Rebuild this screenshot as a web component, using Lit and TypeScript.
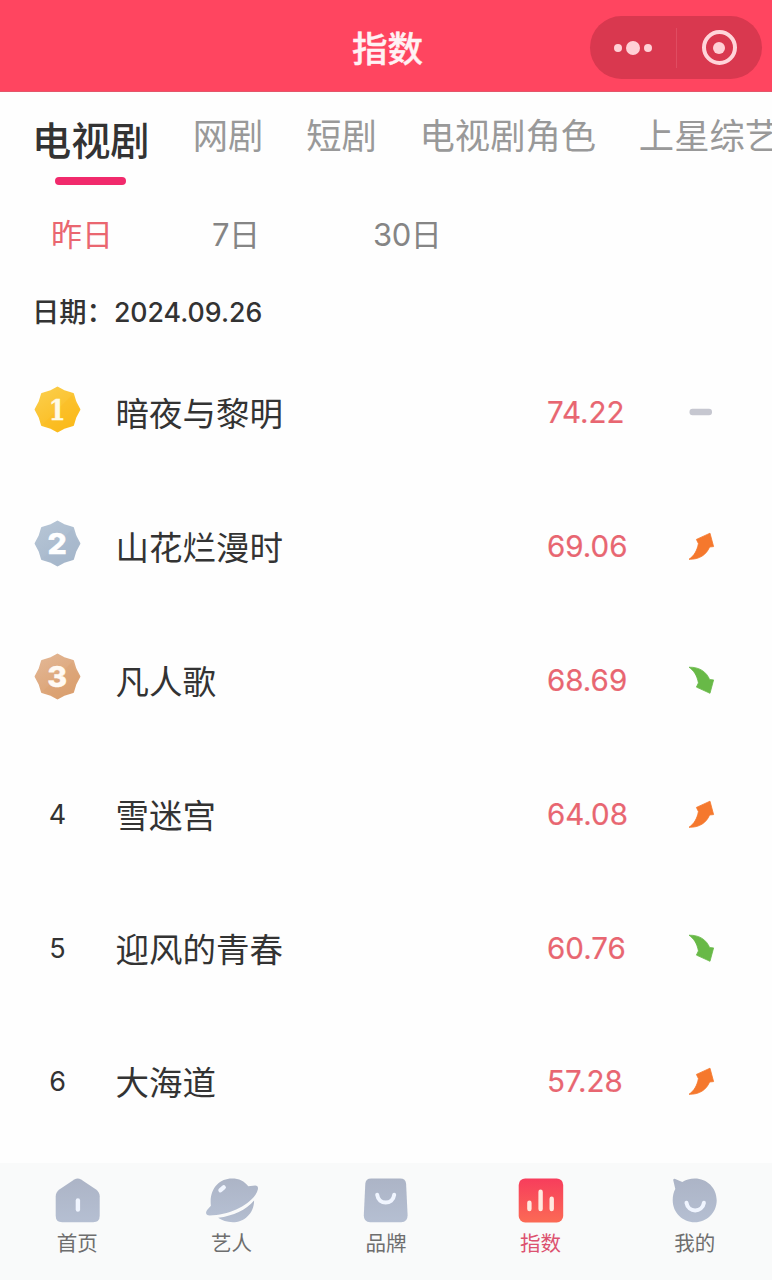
import { LitElement, html, css, svg } from "lit";
import { customElement, property } from "lit/decorators.js";
import { classMap } from "lit/directives/class-map.js";

type Trend = "up" | "down" | "flat";
interface Show { rank: number; name: string; score: string; trend: Trend }

const SHOWS: Show[] = [
  { rank: 1, name: "暗夜与黎明", score: "74.22", trend: "flat" },
  { rank: 2, name: "山花烂漫时", score: "69.06", trend: "up" },
  { rank: 3, name: "凡人歌", score: "68.69", trend: "down" },
  { rank: 4, name: "雪迷宫", score: "64.08", trend: "up" },
  { rank: 5, name: "迎风的青春", score: "60.76", trend: "down" },
  { rank: 6, name: "大海道", score: "57.28", trend: "up" },
];

const MEDALS = [
  { from: "#fbcf4e", to: "#fbbb1c", digit: "#fffbe6" },
  { from: "#b7c6d6", to: "#a6b7cb", digit: "#ffffff" },
  { from: "#e3b897", to: "#dba070", digit: "#fffaf4" },
];

/* Eight-pointed star outline centred on 23.5,23.5 */
const STAR = Array.from({ length: 16 }, (_, i) => {
  const r = i % 2 ? 19.4 : 21.9;
  const a = (i * Math.PI) / 8;
  return `${(23.5 + r * Math.sin(a)).toFixed(2)},${(23.5 - r * Math.cos(a)).toFixed(2)}`;
}).join(" ");

@customElement("rank-medal")
export class RankMedal extends LitElement {
  @property({ type: Number }) rank = 1;
  static styles = css`
    :host { display: block; width: 47px; height: 47px; }
    svg { display: block; }
    .serif { font: 700 28px "DejaVu Serif", serif; }
    .sans { font: 800 28px Inter, sans-serif; }
  `;
  render() {
    const m = MEDALS[this.rank - 1];
    const first = this.rank === 1;
    return html`<svg width="47" height="47" viewBox="0 0 47 47">
      <defs>
        <linearGradient id="g" x1="0" y1="0" x2="0.6" y2="1">
          <stop offset="0" stop-color=${m.from}></stop><stop offset="1" stop-color=${m.to}></stop>
        </linearGradient>
      </defs>
      <polygon points=${STAR} fill="url(#g)" stroke="url(#g)" stroke-width="2" stroke-linejoin="round"></polygon>
      <path d="M9 38 L38 9 L40.5 15.5 L45 23.5 L38.5 38.5 L23.5 45 L16 41 Z" fill=${m.to} opacity="0.35"></path>
      <text class=${first ? "serif" : "sans"} transform=${first ? "translate(23 33.7) scale(.86 1)" : "translate(23.2 34) scale(1.08 1)"}
        text-anchor="middle" fill=${m.digit} stroke=${m.digit} stroke-width=".4">${this.rank}</text>
    </svg>`;
  }
}

@customElement("trend-mark")
export class TrendMark extends LitElement {
  @property() trend: Trend = "flat";
  static styles = css`
    :host { display: block; width: 28px; height: 30px; }
    svg { display: block; }
  `;
  render() {
    const arrow = "M2 28.3 C7 24.8 10 20 11.4 12.6 L9.4 8.4 L23 2.2 L26.6 15.6 L22.6 16 C19.5 23.6 12.5 28.6 2 28.3 Z";
    const mark =
      this.trend === "flat"
        ? svg`<rect x="2.5" y="11.8" width="22.5" height="6.4" rx="3" fill="#c6c7d0"></rect>`
        : this.trend === "up"
          ? svg`<path d=${arrow} fill="#f5782d" stroke="#f5782d" stroke-width=".8" stroke-linejoin="round"></path>`
          : svg`<path d=${arrow} transform="matrix(1 0 0 -1 0 30.5)" fill="#68b947" stroke="#68b947" stroke-width=".8" stroke-linejoin="round"></path>`;
    return html`<svg width="28" height="30" viewBox="0 0 28 30">${mark}</svg>`;
  }
}

const ICONS = {
  home: svg`
    <path d="M22.6 1.6 Q26 -.3 29.4 1.6 L44 11.4 Q48 14.2 48 18.5 V38 Q48 44.5 41.5 44.5 H10.5 Q4 44.5 4 38 V18.5 Q4 14.2 8 11.4 Z" fill="url(#g)"></path>
    <rect x="24" y="20.5" width="4.4" height="13.5" rx="2.2" fill="#f0f5ff"></rect>`,
  planet: svg`
    <path d="M5.2 28 C3.2 11 13.5 .6 26.2 .6 C33.5 .6 38.6 3.2 42.6 8.4 L49.5 7.6 Q52.8 7.6 52.2 11.5 Q51.6 14.3 49.8 17 C41.5 28.8 22 37.6 4 37.6 C.2 37.6 -.6 34.8 1.4 32.2 Z" fill="url(#g)"></path>
    <path d="M12.4 40 C28 37.8 40 32.2 48.4 22.6 C48.3 35.8 38.4 44.4 27 44.4 C21.2 44.4 16.2 42.8 12.4 40 Z" fill="url(#g)"></path>
    <path d="M14.8 12.4 L18 9.6" fill="none" stroke="#f0f5ff" stroke-width="4.4" stroke-linecap="round"></path>`,
  bag: svg`
    <path d="M11.5 .6 H40.5 Q46 .6 46.4 6 L47.9 37.5 Q48 44.4 41.5 44.4 H10.5 Q4 44.4 4.1 37.5 L5.6 6 Q6 .6 11.5 .6 Z" fill="url(#g)"></path>
    <path d="M17.5 17 C18.8 27.4 33.2 27.4 34.5 17" fill="none" stroke="#f0f5ff" stroke-width="4" stroke-linecap="round"></path>`,
  chart: svg`
    <rect x="4" y=".6" width="44.5" height="44" rx="6.5" fill="url(#r)"></rect>
    <path d="M14.7 25 V31.3 M25.9 14 V31.3 M37 21 V31.3" stroke="#ffe9df" stroke-width="4.4" stroke-linecap="round"></path>`,
  me: svg`
    <path d="M4.5 2.2 Q4.8 .6 6.5 1.1 L13.6 4.2 C17 1.8 21.3 .6 26 .6 C38.5 .6 48 10.2 48 22.5 C48 34.8 38.5 44.5 26 44.5 C13.7 44.5 4 34.8 4 22.5 C4 17.7 5 14 6.6 11.1 Z" fill="url(#g)"></path>
    <path d="M17.8 25 C19.5 35.2 33.5 35.2 35.2 25" fill="none" stroke="#f0f5ff" stroke-width="4" stroke-linecap="round"></path>`,
};

const NAV: { icon: keyof typeof ICONS; label: string }[] = [
  { icon: "home", label: "首页" },
  { icon: "planet", label: "艺人" },
  { icon: "bag", label: "品牌" },
  { icon: "chart", label: "指数" },
  { icon: "me", label: "我的" },
];

@customElement("nav-icon")
export class NavIcon extends LitElement {
  @property() icon: keyof typeof ICONS = "home";
  static styles = css`
    :host { display: block; width: 53px; height: 45px; }
    svg { display: block; }
  `;
  render() {
    return html`<svg width="53" height="45" viewBox="-.7 .2 53 45">
      <defs>
        <linearGradient id="g" x1="0" y1="0" x2="0" y2="1"><stop offset="0" stop-color="#acb4c6"></stop><stop offset="1" stop-color="#b5bfd2"></stop></linearGradient>
        <linearGradient id="r" x1="0" y1="0" x2="0" y2="1"><stop offset="0" stop-color="#f73d5c"></stop><stop offset="1" stop-color="#fb6a55"></stop></linearGradient>
      </defs>${ICONS[this.icon]}</svg>`;
  }
}

@customElement("app-root")
export class AppRoot extends LitElement {
  static styles = css`
    :host {
      display: flex; flex-direction: column; width: 772px; height: 1280px; overflow: hidden;
      background: #fefefe; color: #333; box-sizing: border-box;
      font-family: Inter, "Noto Sans CJK SC", sans-serif; white-space: nowrap;
    }
    * { box-sizing: border-box; }
    .header {
      display: grid; grid-template-columns: 1fr auto 1fr; align-items: center; flex: none;
      height: 92px; padding-right: 10px; background: #ff4560; border-bottom: 1px solid #e4566a;
    }
    .title { grid-column: 2; padding: 8px 0 0 13px; color: #fff2f4; font-size: 35.6px; line-height: 50px; font-weight: 500; -webkit-text-stroke: .4px #fff2f4; }
    .capsule {
      justify-self: end; display: flex; align-items: center; width: 172px; height: 63px; margin-top: 4px;
      border-radius: 32px; background: #d9384f;
    }
    .half { flex: 1; display: flex; align-items: center; justify-content: center; gap: 4px; }
    .split { width: 1px; height: 40px; background: #e04c61; }
    .dot { width: 8px; height: 8px; border-radius: 50%; background: #ffd0d6; }
    .dot.big { width: 14px; height: 14px; }
    .ring { display: grid; place-items: center; width: 35px; height: 35px; border: 4px solid #ffd5da; border-radius: 50%; }
    .ring .dot { width: 12px; height: 12px; }
    .tabs { display: flex; flex: none; height: 102px; padding: 14px 0 0 32px; overflow: hidden; }
    .tab { flex: none; margin-right: 42.8px; font-size: 35.3px; line-height: 62px; color: #999; }
    .tab.active { display: flex; flex-direction: column; align-items: center; margin-right: 43.2px; font-size: 39.2px; line-height: 70px; color: #333; font-weight: 500; }
    .bar { width: 71px; height: 8px; margin: 1px 0 0 0; border-radius: 4px; background: #f12a6c; }
    .periods { display: flex; flex: none; height: 80px; padding-left: 51px; font-size: 31px; line-height: 81px; color: #858585; }
    .period { width: 161px; }
    .period + .period { letter-spacing: -.5px; }
    .period.active { color: #ea6670; }
    .date { display: flex; flex: none; height: 71.5px; padding-left: 32px; font-size: 27.3px; line-height: 77px; font-weight: 500; color: #333; }
    .day { font-size: 26.7px; }
    .list { flex: 1; min-height: 0; }
    .row { display: grid; grid-template-columns: 115.4px 431.6px 140.4px 28px; align-items: center; height: 133.8px; }
    .rank { display: flex; justify-content: center; width: 115px; font-size: 27px; padding-top: 1px; }
    .rank rank-medal { margin-bottom: 7px; }
    .name { font-size: 33.5px; line-height: 50px; padding-top: 4px; }
    .score { font-size: 29.5px; line-height: 40px; color: #e86671; -webkit-text-stroke: .2px #e86671; }
    .nav { display: grid; grid-template-columns: repeat(5, 1fr); flex: none; height: 117px; background: #f9fafa; }
    .item { display: flex; flex-direction: column; align-items: center; padding-top: 14.5px; font-size: 20.5px; line-height: 30px; color: #6e6e6e; }
    .item.active { color: #dc5270; }
    .label { margin-top: 6.5px; }
  `;

  render() {
    return html`
      <div class="header">
        <div class="title">指数</div>
        <div class="capsule">
          <div class="half"><i class="dot"></i><i class="dot big"></i><i class="dot"></i></div>
          <div class="split"></div>
          <div class="half"><div class="ring"><i class="dot"></i></div></div>
        </div>
      </div>
      <div class="tabs">
        <div class="tab active">电视剧<i class="bar"></i></div>
        ${["网剧", "短剧", "电视剧角色", "上星综艺"].map((t) => html`<div class="tab">${t}</div>`)}
      </div>
      <div class="periods">
        ${["昨日", "7日", "30日"].map((p, i) => html`<div class=${classMap({ period: true, active: i === 0 })}>${p}</div>`)}
      </div>
      <div class="date">日期：<span class="day">2024.09.26</span></div>
      <div class="list">
        ${SHOWS.map(
          (s) => html`<div class="row">
            <div class="rank">${s.rank < 4 ? html`<rank-medal .rank=${s.rank}></rank-medal>` : s.rank}</div>
            <div class="name">${s.name}</div>
            <div class="score">${s.score}</div>
            <trend-mark .trend=${s.trend}></trend-mark>
          </div>`,
        )}
      </div>
      <div class="nav">
        ${NAV.map(
          (n) => html`<div class=${classMap({ item: true, active: n.icon === "chart" })}>
            <nav-icon .icon=${n.icon}></nav-icon><span class="label">${n.label}</span>
          </div>`,
        )}
      </div>
    `;
  }
}
